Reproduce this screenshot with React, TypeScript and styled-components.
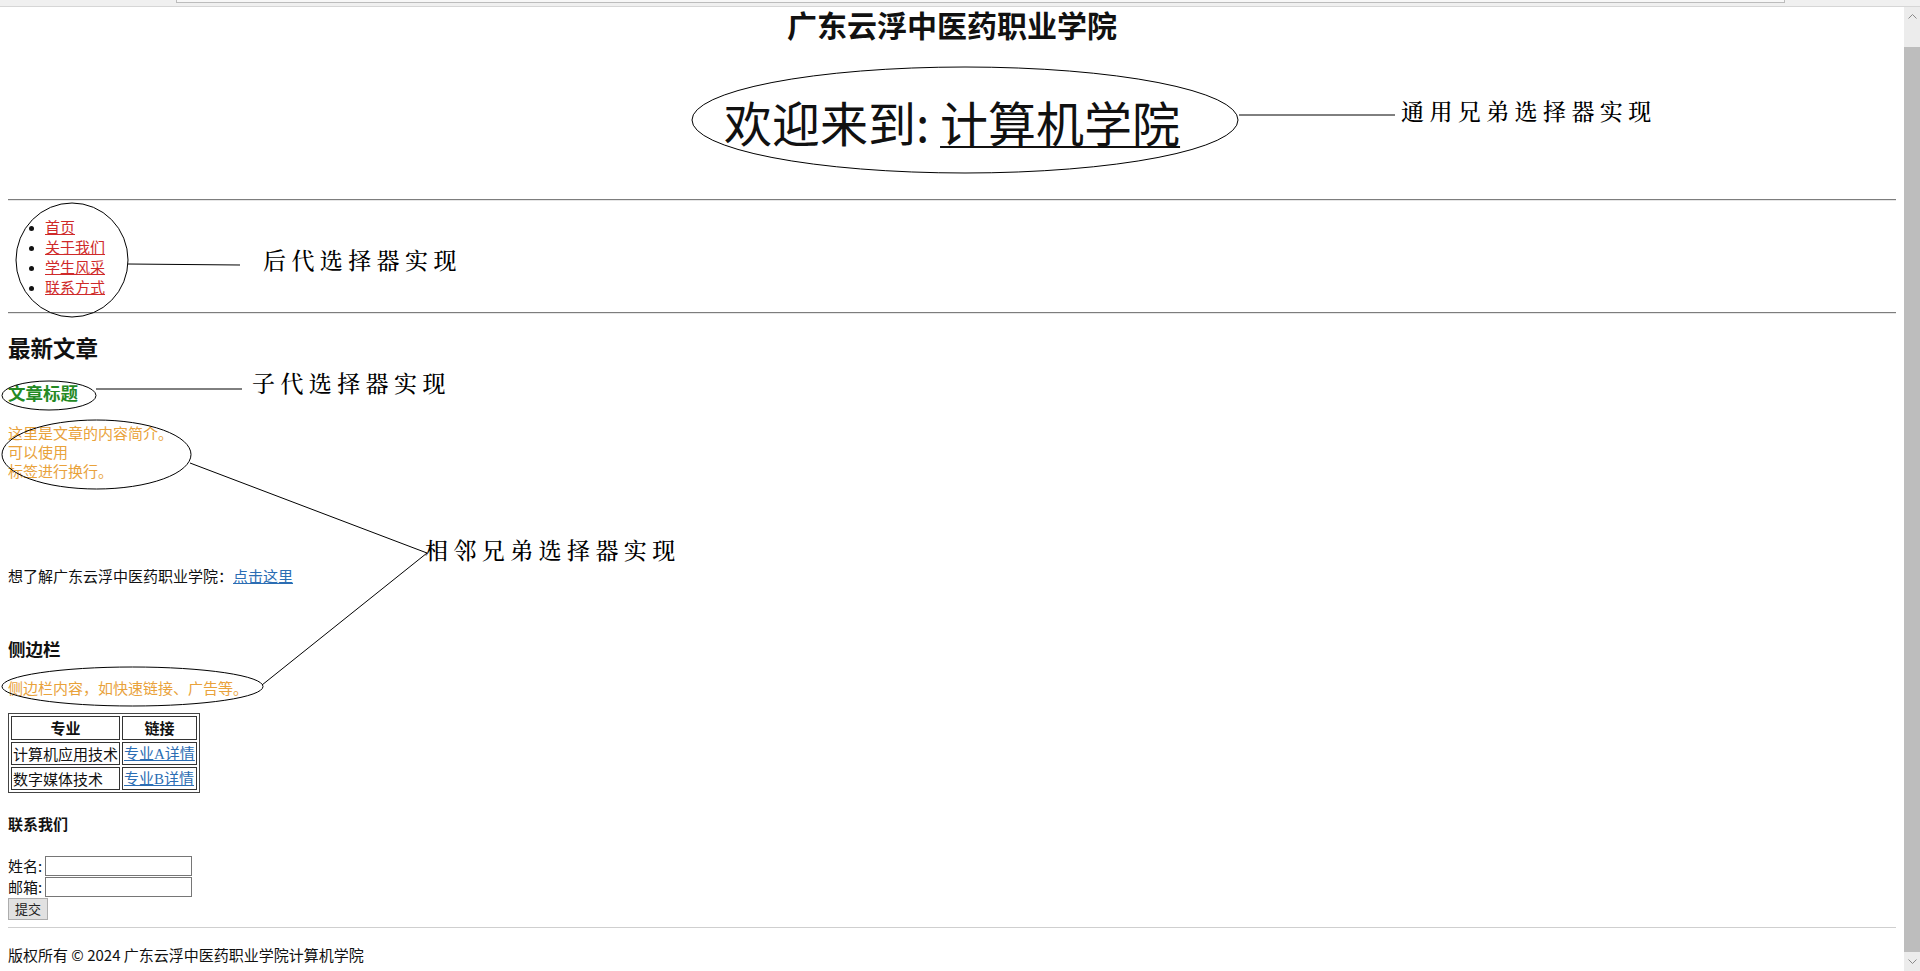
import React from "react";
import styled, { createGlobalStyle } from "styled-components";

const font = `"Noto Sans CJK SC", "Microsoft YaHei", sans-serif`;

const colors = {
	text: "#111111",
	navLink: "#cf2a2a",
	link: "#2b6db3",
	green: "#248a24",
	orange: "#e9a23b",
	rule: "#7d7d7d",
	lightRule: "#cfcfcf",
	chrome: "#f0f0f0",
	thumb: "#bdbdbd",
};

const navItems = ["首页", "关于我们", "学生风采", "联系方式"];

const majors = [
	{ name: "计算机应用技术", link: "专业A详情" },
	{ name: "数字媒体技术", link: "专业B详情" },
];

const ellipses = [
	{ cx: 965, cy: 120, rx: 273, ry: 53 },
	{ cx: 72, cy: 260, rx: 56, ry: 57 },
	{ cx: 49, cy: 395.5, rx: 47, ry: 14.5 },
	{ cx: 96.5, cy: 454.5, rx: 94.5, ry: 34.5 },
	{ cx: 132.5, cy: 686.5, rx: 130.5, ry: 19.5 },
];

const lines = [
	{ x1: 1239, y1: 115, x2: 1395, y2: 115 },
	{ x1: 128, y1: 264, x2: 240, y2: 265 },
	{ x1: 96, y1: 389, x2: 242, y2: 389 },
	{ x1: 190, y1: 463, x2: 427, y2: 553 },
	{ x1: 262, y1: 685, x2: 427, y2: 553 },
];

const labels = [
	{ text: "通用兄弟选择器实现", x: 1401, y: 111 },
	{ text: "后代选择器实现", x: 263, y: 260 },
	{ text: "子代选择器实现", x: 252, y: 383 },
	{ text: "相邻兄弟选择器实现", x: 425, y: 550 },
];

const Chevron: React.FC<{ down?: boolean }> = ({ down }) => (
	<svg width="9" height="6" viewBox="0 0 9 6">
		<polyline
			points={down ? "0.5,0.5 4.5,4.5 8.5,0.5" : "0.5,5.5 4.5,1.5 8.5,5.5"}
			fill="none"
			stroke="#8a8a8a"
			strokeWidth="1"
		/>
	</svg>
);

const App: React.FC = () => {
	return (
		<Window>
			<GlobalStyle />
			<ChromeStrip>
				<AddressBox />
			</ChromeStrip>

			<Viewport>
				<Page>
					<SiteTitle>广东云浮中医药职业学院</SiteTitle>

					<Welcome>
						欢迎来到: <WelcomeLink href="#">计算机学院</WelcomeLink>
					</Welcome>

					<Rule $top={48} />

					<NavList>
						{navItems.map((item) => (
							<li key={item}>
								<NavLink href="#">{item}</NavLink>
							</li>
						))}
					</NavList>

					<Rule />

					<SectionTitle>最新文章</SectionTitle>
					<ArticleTitle>文章标题</ArticleTitle>
					<Summary>
						这里是文章的内容简介。
						<br />
						可以使用
						<br />
						标签进行换行。
					</Summary>

					<Intro>
						想了解广东云浮中医药职业学院：<TextLink href="#">点击这里</TextLink>
					</Intro>

					<SideTitle>侧边栏</SideTitle>
					<SideText>侧边栏内容，如快速链接、广告等。</SideText>

					<MajorTable>
						<thead>
							<tr>
								<HeadCell>专业</HeadCell>
								<HeadCell>链接</HeadCell>
							</tr>
						</thead>
						<tbody>
							{majors.map((m) => (
								<tr key={m.name}>
									<Cell>{m.name}</Cell>
									<Cell>
										<TableLink href="#">{m.link}</TableLink>
									</Cell>
								</tr>
							))}
						</tbody>
					</MajorTable>

					<ContactTitle>联系我们</ContactTitle>

					<ContactForm onSubmit={(e) => e.preventDefault()}>
						<FormRow>
							姓名:<TextInput type="text" />
						</FormRow>
						<FormRow>
							邮箱:<TextInput type="email" />
						</FormRow>
						<SubmitButton type="submit">提交</SubmitButton>
					</ContactForm>

					<FooterRule />
					<Footer>版权所有 © 2024 广东云浮中医药职业学院计算机学院</Footer>
				</Page>

				<ScrollBar>
					<ScrollTop>
						<Chevron />
					</ScrollTop>
					<ScrollThumb />
					<ScrollBottom>
						<Chevron down />
					</ScrollBottom>
				</ScrollBar>
			</Viewport>

			{/* hand-drawn annotations laid over the page */}
			<Annotations>
				<svg width="1920" height="971" viewBox="0 0 1920 971">
					{ellipses.map((e, i) => (
						<ellipse key={i} {...e} fill="none" stroke="#000" strokeWidth="1" />
					))}
					{lines.map((l, i) => (
						<line key={i} {...l} stroke="#000" strokeWidth="1" />
					))}
				</svg>
				{labels.map((l) => (
					<Label key={l.text} $x={l.x} $y={l.y}>
						{l.text}
					</Label>
				))}
			</Annotations>
		</Window>
	);
};

const GlobalStyle = createGlobalStyle`
	html, body {
		margin: 0;
		padding: 0;
		background: #ffffff;
		overflow: hidden;
	}

	body {
		font-family: ${font};
		color: ${colors.text};
	}
`;

const Window = styled.div`
	position: relative;
	width: 1920px;
	height: 971px;
	display: flex;
	flex-direction: column;
	overflow: hidden;
	background: #ffffff;
`;

const ChromeStrip = styled.div`
	height: 7px;
	flex-shrink: 0;
	box-sizing: border-box;
	background: ${colors.chrome};
	border-bottom: 1px solid #d6d6d6;
	display: flex;
	align-items: flex-start;
`;

const AddressBox = styled.div`
	margin-left: 176px;
	width: 1607px;
	height: 2px;
	background: #f7f7f7;
	border-bottom: 1px solid #bcbcbc;
	border-right: 1px solid #bcbcbc;
	border-left: 1px solid #bcbcbc;
`;

const Viewport = styled.div`
	flex: 1;
	display: flex;
	flex-direction: row;
	min-height: 0;
`;

const Page = styled.div`
	flex: 1;
	padding: 0 8px;
	font-size: 15px;
	line-height: 20px;
`;

const SiteTitle = styled.h1`
	margin: 1px 0 0;
	font-size: 30px;
	line-height: 32px;
	font-weight: 700;
	text-align: center;
`;

const Welcome = styled.div`
	margin-top: 51px;
	font-size: 48px;
	line-height: 60px;
	font-weight: 400;
	text-align: center;
`;

const WelcomeLink = styled.a`
	color: ${colors.text};
	text-decoration: underline;
	text-decoration-thickness: 2px;
	text-underline-offset: 4px;
`;

const Rule = styled.hr<{ $top?: number; $bottom?: number }>`
	margin: ${(p) => p.$top ?? 0}px 0 ${(p) => p.$bottom ?? 0}px;
	height: 0;
	border: none;
	border-top: 1px solid ${colors.rule};
	border-bottom: 1px solid #e6e6e6;
`;

const NavList = styled.ul`
	margin: 16px 0 15px;
	padding-left: 37px;
	list-style: disc;

	li {
		line-height: 20px;
	}

	li::marker {
		font-size: 12px;
	}
`;

const NavLink = styled.a`
	color: ${colors.navLink};
	text-decoration: underline;
`;

const SectionTitle = styled.h2`
	margin: 18px 0 0;
	font-size: 22.5px;
	line-height: 30px;
	font-weight: 700;
`;

const ArticleTitle = styled.h3`
	margin: 19px 0 0;
	font-size: 17.5px;
	line-height: 24px;
	font-weight: 700;
	color: ${colors.green};
`;

const Summary = styled.p`
	margin: 18px 0 0;
	line-height: 19px;
	color: ${colors.orange};
`;

const Intro = styled.p`
	margin: 86px 0 0;
`;

const TextLink = styled.a`
	color: ${colors.link};
	text-decoration: underline;
`;

const SideTitle = styled.h3`
	margin: 51px 0 0;
	font-size: 17.5px;
	line-height: 24px;
	font-weight: 700;
`;

const SideText = styled.p`
	margin: 17px 0 0;
	color: ${colors.orange};
`;

const MajorTable = styled.table`
	margin-top: 15px;
	border-collapse: separate;
	border-spacing: 2px;
	border: 1px solid #444;
	font-size: 15px;
`;

const HeadCell = styled.th`
	border: 1px solid #333;
	padding: 1px 2px;
	line-height: 20px;
	font-weight: 700;
	text-align: center;
`;

const Cell = styled.td`
	border: 1px solid #333;
	padding: 0 1px;
	line-height: 19px;
	white-space: nowrap;
`;

const TableLink = styled.a`
	color: ${colors.link};
	text-decoration: underline;
	font-family: "Liberation Serif", ${font};
`;

const ContactTitle = styled.h4`
	margin: 21px 0 0;
	font-size: 15px;
	line-height: 20px;
	font-weight: 700;
`;

const ContactForm = styled.form`
	margin-top: 22px;
	display: flex;
	flex-direction: column;
	align-items: flex-start;
`;

const FormRow = styled.label`
	display: flex;
	align-items: center;
	height: 20.5px;
	line-height: 20px;
`;

const TextInput = styled.input`
	box-sizing: border-box;
	width: 147px;
	height: 20px;
	margin: 0 0 0 3px;
	padding: 0 2px;
	border: 1px solid #767676;
	font-family: ${font};
	font-size: 13px;
`;

const SubmitButton = styled.button`
	box-sizing: border-box;
	width: 40px;
	height: 22px;
	margin-top: 0.5px;
	padding: 0;
	background: #e1e1e1;
	border: 1px solid #adadad;
	font-family: ${font};
	font-size: 13px;
	color: #222;
`;

const FooterRule = styled.hr`
	margin: 7px 0 0;
	height: 0;
	border: none;
	border-top: 1px solid ${colors.lightRule};
`;

const Footer = styled.p`
	margin: 17px 0 0;
	font-size: 15px;
`;

const ScrollBar = styled.div`
	width: 16px;
	flex-shrink: 0;
	display: flex;
	flex-direction: column;
	background: ${colors.chrome};
`;

const ScrollTop = styled.div`
	height: 40px;
	display: flex;
	justify-content: center;
	padding-top: 6px;
	box-sizing: border-box;
	background: #ececec;
`;

const ScrollThumb = styled.div`
	flex: 1;
	background: ${colors.thumb};
`;

const ScrollBottom = styled.div`
	height: 19px;
	display: flex;
	justify-content: center;
	align-items: center;
	background: #ececec;
`;

const Annotations = styled.div`
	position: absolute;
	inset: 0;
	pointer-events: none;

	svg {
		position: absolute;
		left: 0;
		top: 0;
	}
`;

const Label = styled.div<{ $x: number; $y: number }>`
	position: absolute;
	left: ${(p) => p.$x}px;
	top: ${(p) => p.$y - 15}px;
	font-family: "Noto Serif CJK SC", "Noto Sans CJK SC", serif;
	font-size: 23px;
	font-weight: 500;
	line-height: 30px;
	letter-spacing: 5.4px;
	white-space: nowrap;
	color: #000;
`;

export default App;
